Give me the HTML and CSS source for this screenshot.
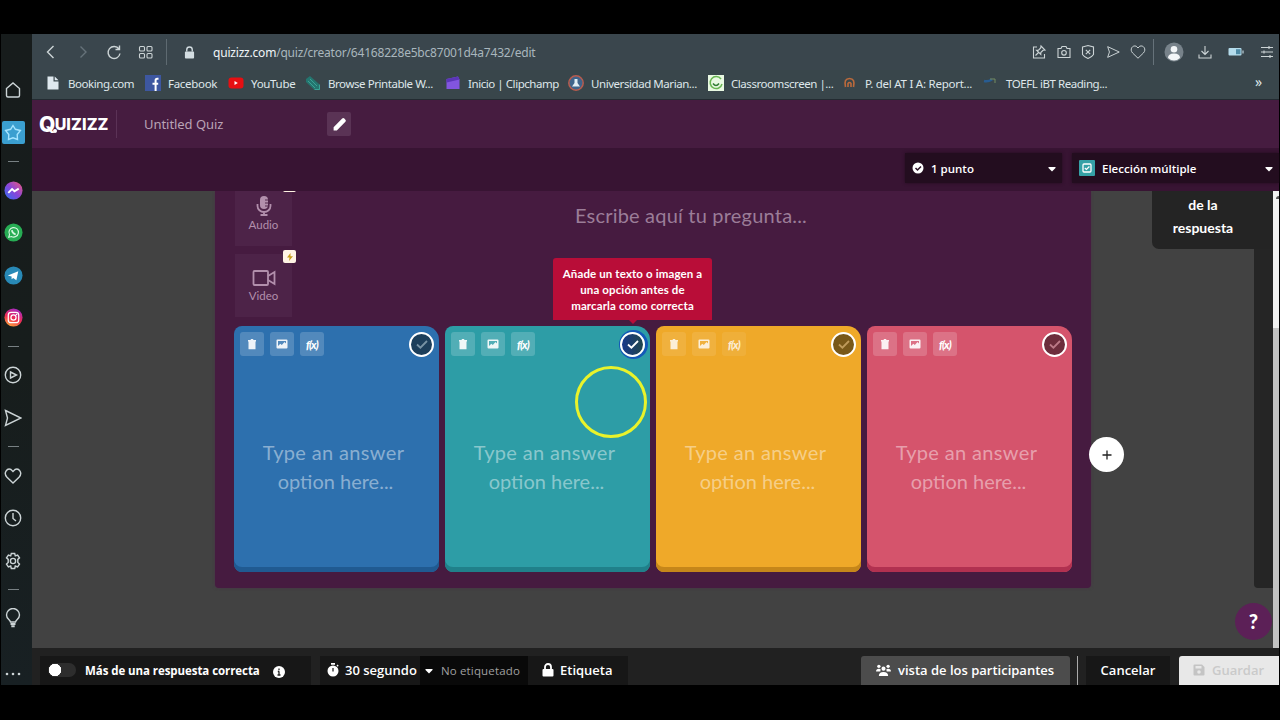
FILE: index.html
```html
<!DOCTYPE html>
<html lang="es">
<head>
    <title>Untitled Quiz</title>
    <meta charset="utf-8" />
    <link rel="stylesheet" href="styles.css">
</head>
<body>

<!-- Shared icons -->
<svg class="sprite">
    <symbol id="trash" viewBox="0 0 12 12"><path d="M2 2h2.500l.5-1h2l.5 1H10v1.500H2zM2.500 3.500h7v7.700h-7z"/></symbol>
    <symbol id="picture" viewBox="0 0 12 12"><path fill-rule="evenodd" d="M1.500 1.500h9q1 0 1 1v7q0 1-1 1h-9q-1 0-1-1v-7q0-1 1-1zM2 3v5l2.300-2.300 1.500 1.300L8.500 4 10 5.500V3z"/></symbol>
    <symbol id="tick" viewBox="0 0 14 12"><path d="M2 6.500l3.400 3.200L12 3" fill="none" stroke="currentColor" stroke-width="1.800"/></symbol>
    <symbol id="heart" viewBox="0 0 18 18"><path d="M9 16L3 10.200C-1 6 3 .8 7 2.500L9 4.500l2-2c4-1.700 8 3.500 4 7.700z"/></symbol>
    <symbol id="send" viewBox="0 0 18 18"><path d="M1.500 1.500L17 9 1.500 16.500 3.500 9z"/></symbol>
    <symbol id="caret" viewBox="0 0 8 6"><path d="M.5 1h7v1L4 5.500.5 2z"/></symbol>
</svg>

<div class="window">

    <!-- Browser sidebar -->
    <nav class="sidebar">
        <a><svg class="line" viewBox="0 0 18 18"><path d="M2.500 7.500L9 2l6.500 5.500v7q0 1.500-1.500 1.500H4q-1.500 0-1.500-1.500z"/></svg></a>
        <a><span class="active"><svg class="line" viewBox="0 0 18 18"><path d="M9 1.500l2.400 3.800 5 1.200-3.200 4 .3 5L9 13.800l-4.500 1.700.3-5-3.200-4 5-1.200z"/></svg></span></a>
        <hr>
        <a><svg class="app" viewBox="0 0 20 20"><defs><linearGradient id="msg" x1="0" y1="1" x2="1" y2="0"><stop offset="0" stop-color="#2b72f5"/><stop offset=".5" stop-color="#8a45d8"/><stop offset="1" stop-color="#f05a78"/></linearGradient></defs><circle cx="10" cy="10" r="9.500" fill="url(#msg)"/><path d="M4.500 12.500l4-4 2.500 2.300 4.500-2.800" fill="none" stroke="#fff" stroke-width="2"/></svg></a>
        <a><svg class="app" viewBox="0 0 20 20"><circle cx="10" cy="10" r="9.500" fill="#27ad54"/><path d="M5 15l.8-2.800a5 5 0 1 1 2 2z" fill="none" stroke="#d5f6df" stroke-width="1.200"/><path d="M8.300 7.500q.2 3.200 4 4.500" fill="none" stroke="#d5f6df" stroke-width="1.700"/></svg></a>
        <a><svg class="app" viewBox="0 0 20 20"><circle cx="10" cy="10" r="9.500" fill="#2889b6"/><path d="M4 10l11-4.500-2 9.500-3.300-2.300L8 14v-3z" fill="#fff"/></svg></a>
        <a><svg class="app" viewBox="0 0 20 20"><defs><linearGradient id="ig" x1=".3" y1="1" x2=".7" y2="0"><stop offset="0" stop-color="#fda33a"/><stop offset=".45" stop-color="#ef2b55"/><stop offset="1" stop-color="#a12bc8"/></linearGradient></defs><circle cx="10" cy="10" r="9.500" fill="url(#ig)"/><g fill="none" stroke="#fff" stroke-width="1.300"><rect x="4.500" y="4.500" width="11" height="11" rx="3"/><circle cx="10" cy="10" r="2.700"/></g><circle cx="13.200" cy="6.900" r=".8" fill="#fff"/></svg></a>
        <hr>
        <a><svg class="line" viewBox="0 0 18 18"><circle cx="9" cy="9" r="7.700"/><path d="M6.500 6l6 3-6 3z"/></svg></a>
        <a><svg class="line"><use href="#send"/></svg></a>
        <hr>
        <a><svg class="line"><use href="#heart"/></svg></a>
        <a><svg class="line" viewBox="0 0 18 18"><circle cx="9" cy="9" r="7.700"/><path d="M9 4v5.500l3 2.500"/></svg></a>
        <a><svg class="line" viewBox="0 0 18 18"><path d="M7.300 1.500h3.400l.6 2.400 2.300-.8 1.900 2.700-1.700 1.600 0 3 1.700 1.700-1.900 2.700-2.300-.8-.6 2.500H7.300L6.700 14l-2.300.8-1.900-2.700 1.700-1.700v-3L2.500 5.800l1.900-2.700 2.300.8z"/><circle cx="9" cy="9" r="2.600"/></svg></a>
        <hr>
        <a><svg class="line bulb" viewBox="0 0 18 20"><path d="M6.500 14C6 11.500 2.500 11 2.500 7a6.500 6.500 0 0 1 13 0c0 4-3.500 4.500-4 7z"/><path d="M6.500 16h5M7.300 18.200h3.400" stroke-width="2"/></svg></a>
        <a class="more"><svg class="dots" viewBox="0 0 16 4"><circle cx="2" cy="2" r="1.300"/><circle cx="8" cy="2" r="1.300"/><circle cx="14" cy="2" r="1.300"/></svg></a>
    </nav>

    <div class="main">

        <!-- Address bar -->
        <div class="toolbar">
            <div class="nav-icons">
                <svg class="line" viewBox="0 0 16 16"><path d="M10.500 2L4.500 8l6 6"/></svg>
                <svg class="line off" viewBox="0 0 16 16"><path d="M5.500 2.500L11 8l-5.500 5.500"/></svg>
                <svg class="line" viewBox="0 0 16 16"><path d="M13 5A6 6 0 1 0 14 9.500M13.500 1.500V5.500H9.500"/></svg>
                <svg class="line thin" viewBox="0 0 16 16"><rect x="1.500" y="2.500" width="5" height="4.500" rx="1"/><rect x="9" y="2.500" width="5" height="4.500" rx="1"/><rect x="1.500" y="9.500" width="5" height="4.500" rx="1"/><rect x="9" y="9.500" width="5" height="4.500" rx="1"/></svg>
            </div>
            <svg class="padlock" viewBox="0 0 12 14"><path d="M3 6V4a3 3 0 0 1 6 0v2" fill="none" stroke="currentColor" stroke-width="1.500"/><rect x="1" y="6" width="10" height="7.500" rx="1" fill="currentColor"/></svg>
            <div class="url"><b>quizizz.com</b>/quiz/creator/64168228e5bc87001d4a7432/edit</div>
            <div class="actions">
                <svg class="line thin" viewBox="0 0 16 16"><path d="M6 3H2.500v11h11v-4M10 2l4 4-2 .3-2.200 2.200v2L5.500 6.200l2-.1L9.700 4zM7.500 8.500L4.500 11.500"/></svg>
                <svg class="line thin" viewBox="0 0 16 16"><path d="M2 4.500h3l1-2h4l1 2h3v9H2z"/><circle cx="8" cy="8.800" r="2.300"/></svg>
                <svg class="line thin" viewBox="0 0 16 16"><path d="M2.500 3L8 1.500 13.500 3v7.500Q12 13 8 14.500 4 13 2.500 10.500z"/><path d="M5.800 5.800l4.400 4.400m0-4.400l-4.400 4.400"/></svg>
                <svg class="line thin" viewBox="0 0 18 18"><path d="M3 3l13 6-13 6 2-6z"/></svg>
                <svg class="line thin"><use href="#heart"/></svg>
            </div>
            <div class="account">
                <svg class="avatar" viewBox="0 0 20 20"><circle cx="10" cy="10" r="9.500" fill="#77828a"/><circle cx="10" cy="7.200" r="3.300" fill="#f3f6f8"/><path d="M4 16q0-4.500 6-4.500t6 4.500q-6 5-12 0z" fill="#f3f6f8"/></svg>
                <svg class="line thin" viewBox="0 0 16 16"><path d="M8 2v8M4.500 7L8 10.500 11.500 7M2 10.500V14h12v-3.500"/></svg>
                <svg class="battery" viewBox="0 0 16 10"><rect x=".5" y="1" width="13" height="7.500" rx="1" fill="#b5dcec"/><rect x="8" y="2.200" width="4.500" height="5" fill="#4e8aa5"/><path d="M15 3.500v3" stroke="#d7edf7"/></svg>
                <svg class="line thin" viewBox="0 0 16 16"><path d="M2 3.500h12M2 8h12M2 12.500h12M10 2v3M5 6.500v3M11 11v3"/></svg>
            </div>
        </div>

        <!-- Bookmarks -->
        <div class="bookmarks">
            <a class="bm-1"><svg viewBox="0 0 16 16"><path d="M2.500 1.500h6v5h5v8h-11zM9.700 1.500l3.800 3.800H9.700z" fill="#dfe9ee"/></svg><span>Booking.com</span></a>
            <a class="bm-2"><svg viewBox="0 0 16 16"><rect width="16" height="16" fill="#3d57a0"/><path d="M13.500 3.800h-1.400q-1.500 0-1.500 1.500V16M7.500 8.800h5.700" fill="none" stroke="#fff" stroke-width="2"/></svg><span>Facebook</span></a>
            <a class="bm-3"><svg viewBox="0 0 16 16"><rect x=".5" y="2.500" width="15" height="11" rx="3" fill="#e60f12"/><path d="M6.500 6L9.800 8l-3.300 2z" fill="#fff"/></svg><span>YouTube</span></a>
            <a class="bm-4"><svg viewBox="0 0 16 16"><path d="M1 4l4-3 9 8 1 6-6-.5L1 7z" fill="#24756f"/><path d="M3 6l7 7M5 4l7 7M14.500 9.500v5h-5" fill="none" stroke="#3aa295"/></svg><span>Browse Printable W...</span></a>
            <a class="bm-5"><svg viewBox="0 0 16 16"><path d="M1.500 4L13 1.500l1.500 3V14h-13z" fill="#8255df"/><path d="M1.500 4L13 1.500l1.500 3-13 3z" fill="#5b35b8"/></svg><span>Inicio | Clipchamp</span></a>
            <a class="bm-6"><svg viewBox="0 0 16 16"><circle cx="8" cy="8" r="7.200" fill="#3f648b" stroke="#b85c4e" stroke-width="1.500"/><path d="M4 11.500h8L9.500 8V4h-3v4z" fill="#e2edf4"/></svg><span>Universidad Marian...</span></a>
            <a class="bm-7"><svg viewBox="0 0 16 16"><rect width="16" height="16" fill="#e9f9e2"/><path d="M13 4A6 6 0 1 0 14 9" fill="none" stroke="#68b552" stroke-width="1.500"/><path d="M5 8.500q3 4 6 0" fill="none" stroke="#317b34" stroke-width="1.500"/></svg><span>Classroomscreen |...</span></a>
            <a class="bm-8"><svg viewBox="0 0 16 16"><path d="M3.500 12Q1.500 3.500 7.500 3.500T11.500 12M6 12V8.500q1.500-2 3 0V12" fill="none" stroke="#bc6a3c" stroke-width="1.600"/></svg><span>P. del AT I A: Report...</span></a>
            <a class="bm-9"><svg viewBox="0 0 16 16"><path d="M1 6q4 1 8-1.500" fill="none" stroke="#285c91" stroke-width="2.500"/><path d="M7 4h5v4" fill="none" stroke="#758c62"/></svg><span>TOEFL iBT Reading...</span></a>
            <span class="overflow">»</span>
        </div>

        <!-- Quiz header -->
        <header class="quiz-header">
            <div class="logo"><span>Q</span>UIZIZZ</div>
            <div class="quiz-title">Untitled Quiz</div>
            <button class="edit-title"><svg viewBox="0 0 14 14"><path d="M9.500 1.500q1-1 2 0l1 1q1 1 0 2l-8 8H1.500v-3z"/></svg></button>
        </header>
        <div class="quiz-options">
            <div class="select points">
                <svg viewBox="0 0 12 12"><circle cx="6" cy="6" r="5.500" fill="#fff"/><path d="M3.500 6l2 2L9 4.500" fill="none" stroke="#2a1024" stroke-width="1.500"/></svg>
                <span>1 punto</span>
                <svg class="caret"><use href="#caret"/></svg>
            </div>
            <div class="select type">
                <svg viewBox="0 0 16 16"><rect width="16" height="16" rx="1" fill="#35a1a6"/><rect x="4" y="4" width="8" height="8" rx="1" fill="none" stroke="#fff" stroke-width="1.300"/><path d="M5.800 8l1.600 1.500 3-3" fill="none" stroke="#fff" stroke-width="1.200"/></svg>
                <span>Elección múltiple</span>
                <svg class="caret"><use href="#caret"/></svg>
            </div>
        </div>

        <!-- Editor -->
        <div class="editor">
            <section class="question">
                <div class="question-top">
                    <div class="media">
                        <div class="media-btn audio"><svg viewBox="0 0 16 20"><rect x="4" y="0" width="8" height="13" rx="4" fill="currentColor"/><path d="M1.500 8v2a6.500 6 0 0 0 13 0V8M8 16v3M4.500 19h7" fill="none" stroke="currentColor" stroke-width="1.800"/><path d="M9 4h3M9 7h3M9 10h3" stroke="#50284a"/></svg>Audio<i class="badge"></i></div>
                        <div class="media-btn video"><svg viewBox="0 0 24 18"><g fill="none" stroke="currentColor" stroke-width="1.800"><rect x="1.500" y="2" width="14.500" height="14" rx="1"/><path d="M16 7l6.500-4v12L16 11"/></g></svg>Video<i class="badge"><svg viewBox="0 0 8 8"><path d="M4.500 0L1 4.500h2.500L3 8l4-4.700H4.500z"/></svg></i></div>
                    </div>
                    <div class="question-text">Escribe aquí tu pregunta...</div>
                </div>
                <div class="answers">
                    <div class="card blue">
                        <div class="tools"><i><svg><use href="#trash"/></svg></i><i><svg><use href="#picture"/></svg></i><i class="fx">f(x)</i><b><svg><use href="#tick"/></svg></b></div>
                        <p>Type an answer<br><span>option here...</span></p>
                    </div>
                    <div class="card teal">
                        <div class="tools"><i><svg><use href="#trash"/></svg></i><i><svg><use href="#picture"/></svg></i><i class="fx">f(x)</i><b class="hover"><svg><use href="#tick"/></svg></b></div>
                        <p>Type an answer<br><span>option here...</span></p>
                        <div class="tooltip">Añade un texto o imagen a<br>una opción antes de<br>marcarla como correcta</div>
                        <div class="ring"></div>
                    </div>
                    <div class="card yellow">
                        <div class="tools"><i><svg><use href="#trash"/></svg></i><i><svg><use href="#picture"/></svg></i><i class="fx">f(x)</i><b><svg><use href="#tick"/></svg></b></div>
                        <p>Type an answer<br><span>option here...</span></p>
                    </div>
                    <div class="card pink">
                        <div class="tools"><i><svg><use href="#trash"/></svg></i><i><svg><use href="#picture"/></svg></i><i class="fx">f(x)</i><b><svg><use href="#tick"/></svg></b></div>
                        <p>Type an answer<br><span>option here...</span></p>
                    </div>
                </div>
                <button class="add"><svg viewBox="0 0 12 12"><path d="M6 1.500v9M1.500 6h9" stroke="#222" stroke-width="1.300"/></svg></button>
            </section>
            <aside class="explanation">
                <div class="explanation-tab">de la<br>respuesta</div>
                <div class="explanation-body"></div>
            </aside>
            <div class="scrollbar"></div>
            <button class="help">?</button>
        </div>

        <!-- Footer -->
        <footer class="footer">
            <div class="multi"><span class="toggle"></span><span class="multi-label">Más de una respuesta correcta</span><svg viewBox="0 0 12 12"><circle cx="6" cy="6" r="6" fill="#fff"/><path d="M6 2.500v1.700M6 5.200v4M4.500 9h3M4.800 5.500H6" stroke="#222" stroke-width="1.300"/></svg></div>
            <div class="time"><svg viewBox="0 0 12 14"><path d="M4 0h4v1.800H4zM6 2.500a5.300 5.300 0 1 1 0 11 5.300 5.300 0 0 1 0-11zM9.500 2.500l1-1 1.200 1.200-1 1z" fill="#fff"/><path d="M6 5v3.500" stroke="#222" stroke-width="1.300"/></svg><span>30 segundo</span></div>
            <div class="tagged"><svg class="caret"><use href="#caret"/></svg><span>No etiquetado</span></div>
            <div class="tag"><svg viewBox="0 0 12 14"><path d="M3 6V4a3 3 0 0 1 6 0v2" fill="none" stroke="#fff" stroke-width="1.800"/><rect x=".5" y="6" width="11" height="7.500" rx="1" fill="#fff"/></svg><span>Etiqueta</span></div>
            <button class="preview"><svg viewBox="0 0 16 14" fill="currentColor"><circle cx="3" cy="2.500" r="1.800"/><circle cx="13" cy="2.500" r="1.800"/><circle cx="8" cy="5" r="2.200"/><path d="M0 8q0-3 3-3 1.500 0 2 1L4.500 8zM16 8q0-3-3-3-1.500 0-2 1l.5 2zM3 13q0-4.500 5-4.500t5 4.500z"/></svg><span>vista de los participantes</span></button>
            <button class="cancel">Cancelar</button>
            <button class="save"><svg viewBox="0 0 12 12"><path fill-rule="evenodd" d="M1.500.5h7.500L11.500 3v7.500q0 1-1 1h-9q-1 0-1-1v-9q0-1 1-1zM2.500 2v2.500h6V2zM6 6.200a1.800 1.800 0 1 0 0 3.600 1.800 1.800 0 0 0 0-3.600z"/></svg><span>Guardar</span></button>
        </footer>
    </div>
</div>

</body>
</html>
```
FILE: styles.css
```css
* {
    box-sizing: border-box;
}

body {
    margin: 0;
    height: 720px;
    padding: 34px 1px 35px;
    background: #000;
    overflow: hidden;
    font-family: "Open Sans", sans-serif;
    color: #fff;
}

button {
    border: none;
    padding: 0;
    color: inherit;
    font-family: inherit;
}

svg {
    display: block;
    flex: none;
}

span, .url {
    white-space: nowrap;
}

.sprite {
    display: none;
}

.line {
    width: 18px;
    height: 18px;
    fill: none;
    stroke: #ccd4d6;
    stroke-width: 1.4;
}

.thin {
    stroke-width: 1.1;
}

.window {
    display: flex;
    height: 651px;
}

/* Browser sidebar */
.sidebar {
    width: 31px;
    flex: none;
    display: flex;
    flex-direction: column;
    padding-top: 34.8px;
    background: linear-gradient(#171c1c, #171d1c 50%, #182023);
}

.sidebar a {
    height: 42.5px;
    width: 24px;
    flex: none;
    display: flex;
    align-items: center;
    justify-content: center;
}

.sidebar hr {
    width: 11px;
    height: 15.2px;
    flex: none;
    margin: 0 0 0 7px;
    border: none;
    background: linear-gradient(#788083, #788083) center / 11px 1px no-repeat;
}

.active {
    width: 23px;
    height: 23px;
    display: flex;
    align-items: center;
    justify-content: center;
    border-radius: 2px;
    background: #3b9fd0;
}

.active .line {
    stroke: #a5e4ff;
}

.app {
    width: 19px;
    height: 19px;
}

.bulb {
    height: 20px;
}

.sidebar .more {
    height: 20px;
    margin-top: auto;
    margin-bottom: 1px;
}

.dots {
    width: 16px;
    height: 4px;
    fill: #ccd4d6;
}

/* Address bar */
.main {
    flex: 1;
    min-width: 0;
    display: flex;
    flex-direction: column;
}

.toolbar {
    height: 36px;
    flex: none;
    display: flex;
    align-items: center;
    padding-left: 11px;
    background: #3a464d;
}

.toolbar svg {
    width: 16px;
    height: 16px;
}

.nav-icons {
    width: 124px;
    height: 26px;
    flex: none;
    display: flex;
    align-items: center;
    gap: 15.5px;
    border-right: 1px solid #5e6a71;
}

.toolbar .off {
    stroke: #66727a;
}

.toolbar .padlock {
    width: 11px;
    height: 13px;
    margin: 0 18px 0 17px;
    color: #d3dde2;
}

.url {
    width: 818px;
    flex: none;
    font-family: "Noto Sans", sans-serif;
    font-size: 12px;
    letter-spacing: -0.2px;
    color: #a9b6bd;
}

.url b {
    font-weight: 400;
    color: #f0f5f7;
}

.actions {
    width: 123px;
    height: 26px;
    flex: none;
    display: flex;
    align-items: center;
    gap: 8.7px;
    border-right: 1px solid #66727a;
}

.account {
    flex: none;
    display: flex;
    align-items: center;
    gap: 15px;
    padding-left: 10px;
}

.toolbar .avatar {
    width: 20px;
    height: 20px;
    margin-right: -2px;
}

.toolbar .battery {
    height: 10px;
}

/* Bookmarks */
.bookmarks {
    height: 30px;
    flex: none;
    display: flex;
    align-items: center;
    padding: 0 0 3px 13px;
    background: #39464b;
    border-bottom: 1px solid #232b31;
    font-family: "Noto Sans", sans-serif;
    font-size: 11.5px;
    letter-spacing: -0.44px;
    color: #dfe7ea;
}

.bookmarks a {
    flex: none;
    display: flex;
    align-items: center;
    gap: 7px;
}

.bookmarks svg {
    width: 16px;
    height: 16px;
}

.bm-1 { width: 100px; }
.bm-2 { width: 83px; }
.bm-3 { width: 77px; }
.bm-4 { width: 140px; }
.bm-5 { width: 123px; }
.bm-6 { width: 140px; }
.bm-7 { width: 134px; }
.bm-8 { width: 141px; }
.bm-9 { width: 272px; }

.bm-2 span, .bm-3 span {
    letter-spacing: -0.3px;
}

.bm-8 span {
    letter-spacing: -0.25px;
}

.overflow {
    font-size: 14px;
    line-height: 14px;
    margin-top: -2px;
}

/* Quiz header */
.quiz-header {
    height: 48px;
    flex: none;
    display: flex;
    align-items: center;
    padding-left: 7px;
    background: #461c40;
}

.logo {
    position: relative;
    width: 78px;
    height: 28px;
    flex: none;
    display: flex;
    align-items: center;
    border-right: 1px solid #5b3256;
    font-family: "Inter", sans-serif;
    font-size: 16px;
    font-weight: 800;
    letter-spacing: 0.1px;
}

.logo span {
    font-size: 21px;
    letter-spacing: -0.8px;
}

/* dot under the Q */
.logo::after {
    content: "";
    position: absolute;
    left: 14px;
    top: 19px;
    width: 4px;
    height: 4px;
    border-radius: 50%;
    background: #fff;
}

.quiz-title {
    width: 183px;
    padding-left: 27px;
    font-family: "Noto Sans", sans-serif;
    font-size: 13px;
    letter-spacing: -0.05px;
    color: #b9a3b6;
}

.edit-title {
    width: 24px;
    height: 24px;
    margin-left: 27px;
    display: flex;
    align-items: center;
    justify-content: center;
    border-radius: 2px;
    background: #5a3355;
}

.edit-title svg {
    width: 15px;
    height: 15px;
    fill: #fff;
}

.quiz-options {
    height: 43px;
    flex: none;
    display: flex;
    justify-content: flex-end;
    align-items: center;
    gap: 10px;
    padding-bottom: 3px;
    background: #381433;
}

.select {
    height: 30px;
    display: flex;
    align-items: center;
    gap: 7px;
    padding: 0 6px 0 7px;
    background: #230d1f;
    box-shadow: 0 0 3px #230d1f;
    font-size: 11.5px;
    font-weight: 600;
}

.select .caret {
    margin-left: auto;
    margin-top: 2px;
}

.caret {
    width: 8px;
    height: 6px;
    fill: #fff;
}

.points {
    width: 157px;
}

.points svg:first-child {
    width: 12px;
    height: 12px;
}

.type {
    width: 207px;
}

.type svg:first-child {
    width: 16px;
    height: 16px;
}

/* Editor */
.editor {
    position: relative;
    height: 457px;
    flex: none;
    display: flex;
    overflow: hidden;
    background: #424242;
    font-family: "Lato", sans-serif;
}

.question {
    position: relative;
    width: 876px;
    height: 397px;
    margin-left: 183px;
    padding: 0 19px;
    flex: none;
    background: #461b40;
    border-radius: 0 0 4px 4px;
    box-shadow: 0 0 3px #4b3247;
}

.question-top {
    height: 135px;
    display: flex;
}

.media {
    width: 60px;
    flex: none;
    display: flex;
    flex-direction: column;
    gap: 8px;
}

.media-btn {
    position: relative;
    width: 57px;
    margin-left: 1px;
    display: flex;
    flex-direction: column;
    align-items: center;
    font-size: 11.5px;
    line-height: 14px;
    color: #b28fac;
    background: #4d2348;
}

.audio {
    height: 55px;
    padding-top: 5px;
}

.audio svg {
    width: 16px;
    height: 20px;
    margin-bottom: 2px;
}

.video {
    height: 63px;
    padding-top: 15px;
}

.video > svg {
    width: 24px;
    height: 18px;
    margin-bottom: 2px;
}

.badge {
    position: absolute;
    right: -4px;
    top: -4px;
    width: 13px;
    height: 13px;
    padding: 2.5px;
    border-radius: 2px;
    background: #fff3e4;
}

.audio .badge {
    top: -12px;
}

.badge svg {
    width: 8px;
    height: 8px;
    fill: #c79c1b;
}

.question-text {
    width: 794px;
    flex: none;
    padding-top: 10px;
    text-align: center;
    font-size: 20px;
    line-height: 28px;
    letter-spacing: 0.2px;
    color: #9b7d98;
}

.answers {
    display: flex;
    gap: 6px;
}

.card {
    position: relative;
    width: 205px;
    height: 246px;
    flex: none;
    padding: 6px 5px 0 6px;
    border-radius: 8px 14px 8px 8px;
}

.blue { background: #2d70ae; box-shadow: inset 0 -5px #205a91; }
.teal { background: #2d9da6; box-shadow: inset 0 -5px #20808a; }
.yellow { background: #efa929; box-shadow: inset 0 -5px #c5861a; }
.pink { background: #d5546c; box-shadow: inset 0 -5px #b13150; }

.tools {
    display: flex;
    gap: 6px;
    height: 24px;
    align-items: center;
}

.tools i {
    width: 24px;
    height: 24px;
    display: flex;
    align-items: center;
    justify-content: center;
    border-radius: 3px;
    background: rgba(255, 255, 255, 0.18);
}

.tools i svg {
    width: 12px;
    height: 12px;
    fill: #fff;
    opacity: 0.9;
}

.tools .fx {
    font-size: 11px;
    font-weight: 900;
    letter-spacing: -0.8px;
}

.yellow .tools i {
    background: rgba(255, 255, 255, 0.1);
}

.yellow .tools i svg, .yellow .fx {
    opacity: 0.8;
}

.tools b {
    width: 25px;
    height: 25px;
    margin-left: auto;
    display: flex;
    align-items: center;
    justify-content: center;
    border: 2px solid #fff;
    border-radius: 50%;
    color: #7893a4;
    background: #1d3f5b;
}

.tools b svg {
    width: 14px;
    height: 12px;
}

.tools .hover {
    color: #fff;
    background: linear-gradient(90deg, #17398a, #20464b);
    box-shadow: 1px 0 0 2px #1458b8;
}

.yellow .tools b {
    color: #bf9a5b;
    background: #795819;
}

.pink .tools b {
    color: #bb7a87;
    background: #6c2d3c;
}

.card p {
    margin: 82px 7px 0 0;
    text-align: center;
    font-size: 20px;
    line-height: 29px;
    letter-spacing: 0.35px;
    color: rgba(255, 255, 255, 0.45);
}

.card p span {
    padding-left: 4px;
    letter-spacing: 0;
}

.tooltip {
    position: absolute;
    left: 108px;
    top: -68px;
    width: 159px;
    height: 62px;
    padding-top: 8px;
    border-radius: 3px 3px 0 0;
    text-align: center;
    font-size: 11.5px;
    line-height: 16px;
    font-weight: 700;
    letter-spacing: 0.12px;
    background: #b90d38;
}

.tooltip::after {
    content: "";
    position: absolute;
    left: 76px;
    top: 62px;
    border: 4px solid transparent;
    border-top-color: #b90d38;
}

.ring {
    position: absolute;
    left: 130px;
    top: 40px;
    width: 72px;
    height: 72px;
    border: 3px solid #e9f32b;
    border-radius: 50%;
}

.add {
    position: absolute;
    left: 874px;
    top: 246px;
    width: 35px;
    height: 35px;
    display: flex;
    align-items: center;
    justify-content: center;
    border-radius: 50%;
    background: #fff;
}

.add svg {
    width: 12px;
    height: 12px;
}

.explanation {
    width: 121px;
    margin-left: auto;
    display: flex;
    flex-direction: column;
    align-items: flex-end;
}

.explanation-tab {
    width: 121px;
    height: 58px;
    padding: 2px 19px 0 0;
    border-radius: 0 0 0 7px;
    text-align: center;
    font-size: 14px;
    line-height: 23px;
    font-weight: 700;
    background: #242424;
}

.explanation-body {
    width: 19px;
    height: 339px;
    border-radius: 0 0 0 4px;
    background: #252525;
}

.scrollbar {
    width: 6px;
    background: linear-gradient(#f1f1f1 137px, #c3c3c3 137px);
}

/* scroll arrow, cut by the window edge */
.scrollbar::before {
    content: "";
    display: block;
    width: 3px;
    height: 3px;
    margin: 5px 0 0 3px;
    border-radius: 3px 0 0 0;
    background: #555;
}

.help {
    position: absolute;
    right: 7px;
    top: 412px;
    width: 37px;
    height: 37px;
    padding-bottom: 1px;
    border-radius: 50%;
    font-size: 20px;
    font-weight: 900;
    background: #5c2057;
}

/* Footer */
.footer {
    flex: 1;
    display: flex;
    padding: 8px 0 0 8px;
    background: #212121;
    font-size: 13px;
    font-weight: 600;
}

.footer > * {
    flex: none;
    display: flex;
    align-items: center;
    padding-bottom: 1px;
    background: #171717;
}

.multi {
    width: 271px;
    margin-right: 9px;
    padding-left: 8px;
}

.toggle {
    width: 28px;
    height: 14px;
    flex: none;
    border-radius: 7px;
    background: radial-gradient(circle at 7px 7px, #fff 6px, #2d2d2d 6.5px);
}

.multi-label {
    width: 197px;
    flex: none;
    padding-left: 9px;
    font-size: 11.5px;
    font-weight: 700;
    letter-spacing: -0.07px;
}

.multi svg {
    width: 12px;
    height: 12px;
    margin-top: 3px;
}

.time {
    width: 100px;
    padding-left: 7px;
    gap: 6px;
}

.time svg, .tag svg {
    width: 12px;
    height: 14px;
}

.footer .tagged {
    width: 108px;
    padding-left: 5px;
    gap: 8px;
    font-size: 11.5px;
    font-weight: 400;
    letter-spacing: 0.15px;
    color: #a0a0a0;
    background: #090909;
}

.tagged .caret {
    margin-top: 2px;
}

.tag {
    width: 100px;
    padding-left: 14px;
    gap: 6px;
}

.footer .preview {
    width: 209px;
    margin-left: auto;
    padding-left: 15px;
    gap: 7px;
    border-radius: 3px 3px 0 0;
    font-size: 13px;
    font-weight: 600;
    background: #4c4c4c;
}

.preview svg {
    width: 15px;
    height: 13px;
}

.cancel {
    position: relative;
    width: 84px;
    margin: 0 9px 0 16px;
    justify-content: center;
    font-size: 13px;
    font-weight: 600;
}

.cancel::before {
    content: "";
    position: absolute;
    left: -9px;
    top: 0;
    bottom: 0;
    width: 1px;
    background: #aaa;
}

.footer .save {
    width: 100px;
    padding-left: 14px;
    gap: 7px;
    border-radius: 3px 0 0 0;
    font-size: 13px;
    font-weight: 600;
    color: #cacaca;
    background: #e8e8e8;
}

.save svg {
    width: 12px;
    height: 12px;
    fill: #c4c4c4;
}
```
